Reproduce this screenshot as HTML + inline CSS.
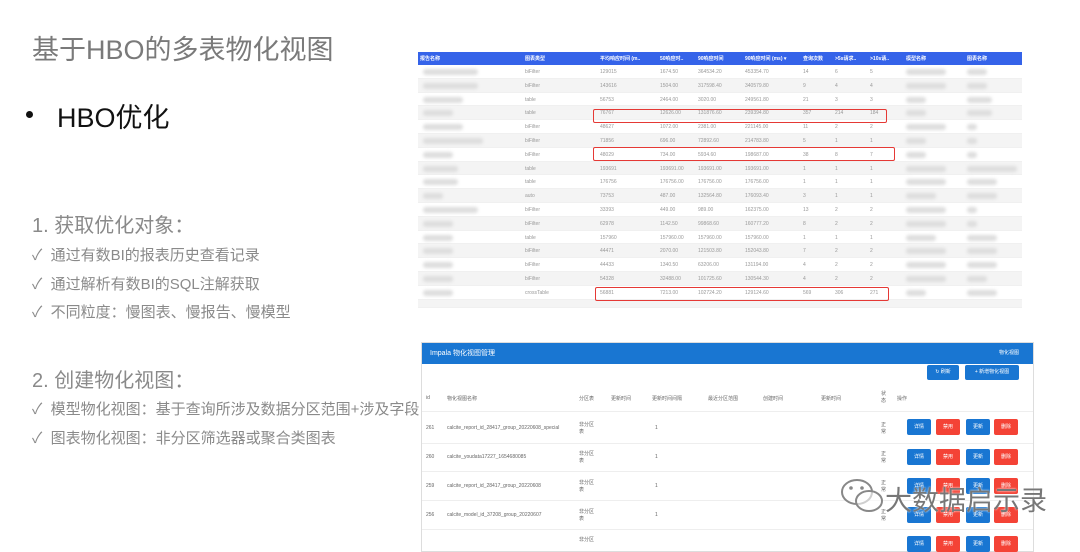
<!DOCTYPE html>
<html><head><meta charset="utf-8"><style>
*{margin:0;padding:0;box-sizing:border-box}
body{width:1080px;height:544px;background:#fff;position:relative;overflow:hidden;font-family:"Liberation Sans","Noto Sans CJK SC",sans-serif}
.a{position:absolute;white-space:nowrap}
.g{color:#8a8a8a}
.t{position:absolute;left:418px;top:52px;width:604px}
.hd{height:13px;background:#3563e9;position:relative}
.r{height:13.8px;position:relative;border-bottom:1px solid #f0f0f0}
.r:nth-child(odd){background:#f4f4f4}
.c{position:absolute;font-size:5px;color:#999;top:4px}
.hd .c{color:#fff;font-weight:bold;top:3px}
.bl{position:absolute;height:6px;background:#ddd;border-radius:3px;top:4px;filter:blur(1.5px)}
.red{position:absolute;border:1.6px solid #e53935;border-radius:2px}
.p{position:absolute;left:421px;top:342px;width:613px;height:210px;border:1px solid #ddd;background:#fff}
.ph{height:21px;background:#1976d2;color:#fff;font-size:7px;padding:5px 8px}
.pc{position:absolute;font-size:5px;color:#666}
.btn{position:absolute;height:16px;width:24px;border-radius:2px;color:#fff;font-size:5px;text-align:center;line-height:16px}
.b{background:#1976d2}.rd{background:#f44336}
.ck{font-size:15px}
</style></head><body>
<div class="a g" style="left:32px;top:28px;font-size:27px;color:#7a7a7a">基于HBO的多表物化视图</div>
<div class="a" style="left:26px;top:111px;width:7px;height:7px;border-radius:50%;background:#111"></div>
<div class="a" style="left:57px;top:96px;font-size:27px;color:#111">HBO优化</div>
<div class="a g" style="left:32px;top:209px;font-size:20px">1. 获取优化对象：</div>
<div class="a g ck" style="left:32px;top:244px">✓&nbsp; 通过有数BI的报表历史查看记录</div>
<div class="a g ck" style="left:32px;top:273px">✓&nbsp; 通过解析有数BI的SQL注解获取</div>
<div class="a g ck" style="left:32px;top:301px">✓&nbsp; 不同粒度：慢图表、慢报告、慢模型</div>
<div class="a g" style="left:32px;top:364px;font-size:20px">2. 创建物化视图：</div>
<div class="a g ck" style="left:32px;top:398px">✓&nbsp; 模型物化视图：基于查询所涉及数据分区范围+涉及字段</div>
<div class="a g ck" style="left:32px;top:427px">✓&nbsp; 图表物化视图：非分区筛选器或聚合类图表</div>

<div class="t">
<div class="hd"><span class="c" style="left:2px">报告名称</span><span class="c" style="left:107px">图表类型</span><span class="c" style="left:182px">平均响应时间 (m..</span><span class="c" style="left:242px">50响应时..</span><span class="c" style="left:280px">90响应时间</span><span class="c" style="left:327px">90响应时间 (ms) ▾</span><span class="c" style="left:385px">查询次数</span><span class="c" style="left:417px">&gt;5s请求..</span><span class="c" style="left:452px">&gt;10s请..</span><span class="c" style="left:488px">模型名称</span><span class="c" style="left:549px">图表名称</span></div>
<div class="r"><span class="bl" style="left:5px;width:55px"></span><span class="c" style="left:107px">biFilter</span><span class="c" style="left:182px">129015</span><span class="c" style="left:242px">1674.50</span><span class="c" style="left:280px">364534.20</span><span class="c" style="left:327px">453354.70</span><span class="c" style="left:385px">14</span><span class="c" style="left:417px">6</span><span class="c" style="left:452px">5</span><span class="bl" style="left:488px;width:40px"></span><span class="bl" style="left:549px;width:20px"></span></div>
<div class="r"><span class="bl" style="left:5px;width:55px"></span><span class="c" style="left:107px">biFilter</span><span class="c" style="left:182px">143616</span><span class="c" style="left:242px">1504.00</span><span class="c" style="left:280px">317598.40</span><span class="c" style="left:327px">340579.80</span><span class="c" style="left:385px">9</span><span class="c" style="left:417px">4</span><span class="c" style="left:452px">4</span><span class="bl" style="left:488px;width:40px"></span><span class="bl" style="left:549px;width:20px"></span></div>
<div class="r"><span class="bl" style="left:5px;width:40px"></span><span class="c" style="left:107px">table</span><span class="c" style="left:182px">56753</span><span class="c" style="left:242px">2464.00</span><span class="c" style="left:280px">3020.00</span><span class="c" style="left:327px">249561.80</span><span class="c" style="left:385px">21</span><span class="c" style="left:417px">3</span><span class="c" style="left:452px">3</span><span class="bl" style="left:488px;width:20px"></span><span class="bl" style="left:549px;width:25px"></span></div>
<div class="r"><span class="bl" style="left:5px;width:30px"></span><span class="c" style="left:107px">table</span><span class="c" style="left:182px">76767</span><span class="c" style="left:242px">12626.00</span><span class="c" style="left:280px">131876.60</span><span class="c" style="left:327px">239394.80</span><span class="c" style="left:385px">357</span><span class="c" style="left:417px">214</span><span class="c" style="left:452px">184</span><span class="bl" style="left:488px;width:20px"></span><span class="bl" style="left:549px;width:25px"></span></div>
<div class="r"><span class="bl" style="left:5px;width:40px"></span><span class="c" style="left:107px">biFilter</span><span class="c" style="left:182px">48627</span><span class="c" style="left:242px">1072.00</span><span class="c" style="left:280px">2381.00</span><span class="c" style="left:327px">221145.00</span><span class="c" style="left:385px">11</span><span class="c" style="left:417px">2</span><span class="c" style="left:452px">2</span><span class="bl" style="left:488px;width:40px"></span><span class="bl" style="left:549px;width:10px"></span></div>
<div class="r"><span class="bl" style="left:5px;width:60px"></span><span class="c" style="left:107px">biFilter</span><span class="c" style="left:182px">71856</span><span class="c" style="left:242px">696.00</span><span class="c" style="left:280px">72892.60</span><span class="c" style="left:327px">214783.80</span><span class="c" style="left:385px">5</span><span class="c" style="left:417px">1</span><span class="c" style="left:452px">1</span><span class="bl" style="left:488px;width:20px"></span><span class="bl" style="left:549px;width:10px"></span></div>
<div class="r"><span class="bl" style="left:5px;width:30px"></span><span class="c" style="left:107px">biFilter</span><span class="c" style="left:182px">48029</span><span class="c" style="left:242px">734.00</span><span class="c" style="left:280px">5934.60</span><span class="c" style="left:327px">198687.00</span><span class="c" style="left:385px">38</span><span class="c" style="left:417px">8</span><span class="c" style="left:452px">7</span><span class="bl" style="left:488px;width:20px"></span><span class="bl" style="left:549px;width:10px"></span></div>
<div class="r"><span class="bl" style="left:5px;width:35px"></span><span class="c" style="left:107px">table</span><span class="c" style="left:182px">193691</span><span class="c" style="left:242px">193691.00</span><span class="c" style="left:280px">193691.00</span><span class="c" style="left:327px">193691.00</span><span class="c" style="left:385px">1</span><span class="c" style="left:417px">1</span><span class="c" style="left:452px">1</span><span class="bl" style="left:488px;width:40px"></span><span class="bl" style="left:549px;width:50px"></span></div>
<div class="r"><span class="bl" style="left:5px;width:35px"></span><span class="c" style="left:107px">table</span><span class="c" style="left:182px">176756</span><span class="c" style="left:242px">176756.00</span><span class="c" style="left:280px">176756.00</span><span class="c" style="left:327px">176756.00</span><span class="c" style="left:385px">1</span><span class="c" style="left:417px">1</span><span class="c" style="left:452px">1</span><span class="bl" style="left:488px;width:40px"></span><span class="bl" style="left:549px;width:30px"></span></div>
<div class="r"><span class="bl" style="left:5px;width:20px"></span><span class="c" style="left:107px">auto</span><span class="c" style="left:182px">73753</span><span class="c" style="left:242px">487.00</span><span class="c" style="left:280px">132564.80</span><span class="c" style="left:327px">176093.40</span><span class="c" style="left:385px">3</span><span class="c" style="left:417px">1</span><span class="c" style="left:452px">1</span><span class="bl" style="left:488px;width:30px"></span><span class="bl" style="left:549px;width:30px"></span></div>
<div class="r"><span class="bl" style="left:5px;width:55px"></span><span class="c" style="left:107px">biFilter</span><span class="c" style="left:182px">33393</span><span class="c" style="left:242px">449.00</span><span class="c" style="left:280px">989.00</span><span class="c" style="left:327px">162375.00</span><span class="c" style="left:385px">13</span><span class="c" style="left:417px">2</span><span class="c" style="left:452px">2</span><span class="bl" style="left:488px;width:40px"></span><span class="bl" style="left:549px;width:10px"></span></div>
<div class="r"><span class="bl" style="left:5px;width:30px"></span><span class="c" style="left:107px">biFilter</span><span class="c" style="left:182px">62978</span><span class="c" style="left:242px">1142.50</span><span class="c" style="left:280px">99868.60</span><span class="c" style="left:327px">160777.20</span><span class="c" style="left:385px">8</span><span class="c" style="left:417px">2</span><span class="c" style="left:452px">2</span><span class="bl" style="left:488px;width:40px"></span><span class="bl" style="left:549px;width:10px"></span></div>
<div class="r"><span class="bl" style="left:5px;width:30px"></span><span class="c" style="left:107px">table</span><span class="c" style="left:182px">157960</span><span class="c" style="left:242px">157960.00</span><span class="c" style="left:280px">157960.00</span><span class="c" style="left:327px">157960.00</span><span class="c" style="left:385px">1</span><span class="c" style="left:417px">1</span><span class="c" style="left:452px">1</span><span class="bl" style="left:488px;width:30px"></span><span class="bl" style="left:549px;width:30px"></span></div>
<div class="r"><span class="bl" style="left:5px;width:30px"></span><span class="c" style="left:107px">biFilter</span><span class="c" style="left:182px">44471</span><span class="c" style="left:242px">2070.00</span><span class="c" style="left:280px">121503.80</span><span class="c" style="left:327px">152043.80</span><span class="c" style="left:385px">7</span><span class="c" style="left:417px">2</span><span class="c" style="left:452px">2</span><span class="bl" style="left:488px;width:40px"></span><span class="bl" style="left:549px;width:30px"></span></div>
<div class="r"><span class="bl" style="left:5px;width:30px"></span><span class="c" style="left:107px">biFilter</span><span class="c" style="left:182px">44433</span><span class="c" style="left:242px">1340.50</span><span class="c" style="left:280px">63206.00</span><span class="c" style="left:327px">131194.00</span><span class="c" style="left:385px">4</span><span class="c" style="left:417px">2</span><span class="c" style="left:452px">2</span><span class="bl" style="left:488px;width:40px"></span><span class="bl" style="left:549px;width:30px"></span></div>
<div class="r"><span class="bl" style="left:5px;width:30px"></span><span class="c" style="left:107px">biFilter</span><span class="c" style="left:182px">54328</span><span class="c" style="left:242px">32488.00</span><span class="c" style="left:280px">101725.60</span><span class="c" style="left:327px">130544.30</span><span class="c" style="left:385px">4</span><span class="c" style="left:417px">2</span><span class="c" style="left:452px">2</span><span class="bl" style="left:488px;width:40px"></span><span class="bl" style="left:549px;width:20px"></span></div>
<div class="r"><span class="bl" style="left:5px;width:30px"></span><span class="c" style="left:107px">crossTable</span><span class="c" style="left:182px">56881</span><span class="c" style="left:242px">7213.00</span><span class="c" style="left:280px">102724.20</span><span class="c" style="left:327px">129124.60</span><span class="c" style="left:385px">569</span><span class="c" style="left:417px">306</span><span class="c" style="left:452px">271</span><span class="bl" style="left:488px;width:20px"></span><span class="bl" style="left:549px;width:30px"></span></div>
<div class="r" style="height:8px"></div>
</div>
<div class="red" style="left:593px;top:109px;width:294px;height:14px"></div>
<div class="red" style="left:593px;top:147px;width:302px;height:14px"></div>
<div class="red" style="left:595px;top:287px;width:294px;height:14px"></div>

<div class="p">
<div class="ph">Impala 物化视图管理<span style="position:absolute;right:14px;top:6px;font-size:5px">物化视图</span></div>
<div class="btn b" style="left:505px;top:22px;width:32px;height:15px;line-height:15px">↻ 刷新</div>
<div class="btn b" style="left:543px;top:22px;width:54px;height:15px;line-height:15px">+ 新增物化视图</div>
<span class="pc" style="left:4px;top:52px">id</span><span class="pc" style="left:25px;top:52px">物化视图名称</span><span class="pc" style="left:157px;top:52px">分区表</span><span class="pc" style="left:189px;top:52px">更新时间</span><span class="pc" style="left:230px;top:52px">更新时间间隔</span><span class="pc" style="left:286px;top:52px">最近分区范围</span><span class="pc" style="left:341px;top:52px">创建时间</span><span class="pc" style="left:399px;top:52px">更新时间</span><span class="pc" style="left:459px;top:47px">状<br>态</span><span class="pc" style="left:475px;top:52px">操作</span>
<div style="position:absolute;left:0;top:68px;width:611px;border-top:1px solid #eee"></div>
<div style="position:absolute;left:0;top:100px;width:611px;border-top:1px solid #eee"></div>
<div style="position:absolute;left:0;top:128px;width:611px;border-top:1px solid #eee"></div>
<div style="position:absolute;left:0;top:157px;width:611px;border-top:1px solid #eee"></div>
<div style="position:absolute;left:0;top:186px;width:611px;border-top:1px solid #eee"></div>
<span class="pc" style="left:4px;top:82px">261</span><span class="pc" style="left:25px;top:82px">calcite_report_id_28417_group_20220608_special</span><span class="pc" style="left:157px;top:78px">非分区<br>表</span><span class="pc" style="left:233px;top:82px">1</span><span class="pc" style="left:459px;top:78px">正<br>常</span>
<span class="pc" style="left:4px;top:111px">260</span><span class="pc" style="left:25px;top:111px">calcite_youdata17227_1654680085</span><span class="pc" style="left:157px;top:107px">非分区<br>表</span><span class="pc" style="left:233px;top:111px">1</span><span class="pc" style="left:459px;top:107px">正<br>常</span>
<span class="pc" style="left:4px;top:140px">259</span><span class="pc" style="left:25px;top:140px">calcite_report_id_28417_group_20220608</span><span class="pc" style="left:157px;top:136px">非分区<br>表</span><span class="pc" style="left:233px;top:140px">1</span><span class="pc" style="left:459px;top:136px">正<br>常</span>
<span class="pc" style="left:4px;top:169px">256</span><span class="pc" style="left:25px;top:169px">calcite_model_id_37208_group_20220607</span><span class="pc" style="left:157px;top:165px">非分区<br>表</span><span class="pc" style="left:233px;top:169px">1</span><span class="pc" style="left:459px;top:165px">正<br>常</span>
<span class="pc" style="left:157px;top:193px">非分区</span>
<div class="btn b" style="left:485px;top:76px">详情</div><div class="btn rd" style="left:514px;top:76px">禁用</div><div class="btn b" style="left:544px;top:76px">更新</div><div class="btn rd" style="left:572px;top:76px">删除</div>
<div class="btn b" style="left:485px;top:106px">详情</div><div class="btn rd" style="left:514px;top:106px">禁用</div><div class="btn b" style="left:544px;top:106px">更新</div><div class="btn rd" style="left:572px;top:106px">删除</div>
<div class="btn b" style="left:485px;top:135px">详情</div><div class="btn rd" style="left:514px;top:135px">禁用</div><div class="btn b" style="left:544px;top:135px">更新</div><div class="btn rd" style="left:572px;top:135px">删除</div>
<div class="btn b" style="left:485px;top:164px">详情</div><div class="btn rd" style="left:514px;top:164px">禁用</div><div class="btn b" style="left:544px;top:164px">更新</div><div class="btn rd" style="left:572px;top:164px">删除</div>
<div class="btn b" style="left:485px;top:193px">详情</div><div class="btn rd" style="left:514px;top:193px">禁用</div><div class="btn b" style="left:544px;top:193px">更新</div><div class="btn rd" style="left:572px;top:193px">删除</div>
</div>

<svg class="a" style="left:840px;top:477px" width="46" height="38" viewBox="0 0 46 38"><ellipse cx="17" cy="15" rx="15" ry="12" fill="rgba(255,255,255,.6)" stroke="#888" stroke-width="2"/><ellipse cx="29" cy="24" rx="13" ry="10" fill="rgba(255,255,255,.6)" stroke="#888" stroke-width="2"/><circle cx="11" cy="11" r="1.8" fill="#888"/><circle cx="22" cy="11" r="1.8" fill="#888"/></svg>
<div class="a" style="left:885px;top:479px;font-size:27px;color:#777;text-shadow:0 0 2px #fff">大数据启示录</div>
</body></html>
